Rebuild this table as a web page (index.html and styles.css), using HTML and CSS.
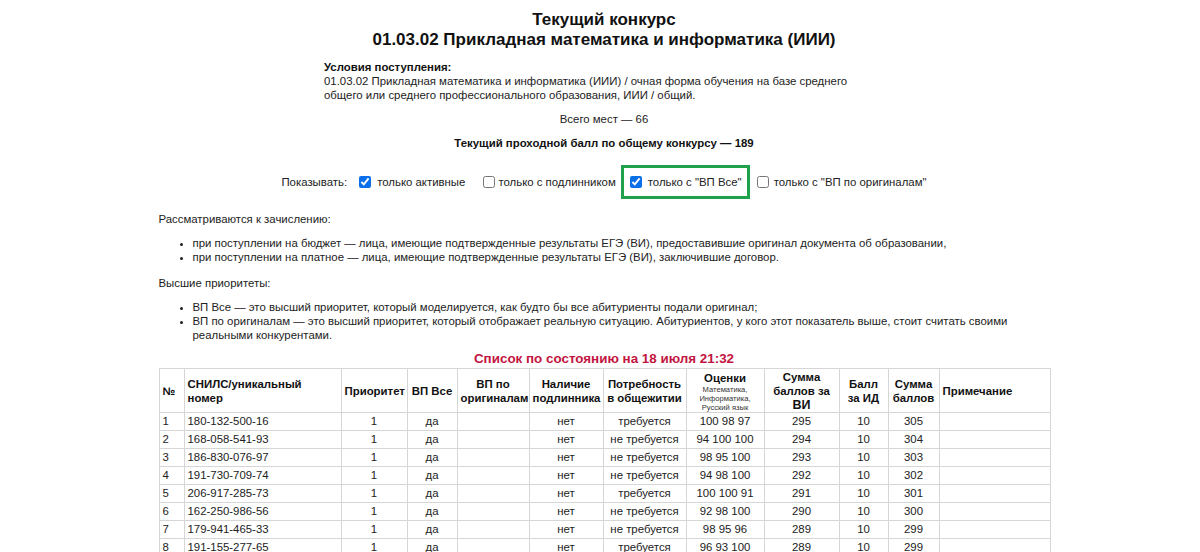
FILE: index.html
```html
<!DOCTYPE html>
<html lang="ru">
<head>
<meta charset="utf-8">
<title>Текущий конкурс</title>
<link rel="stylesheet" href="styles.css">
</head>
<body>
<div class="page">
  <h1 class="title">Текущий конкурс<br>01.03.02 Прикладная математика и информатика (ИИИ)</h1>

  <div class="conditions">
    <b>Условия поступления:</b><br>
    01.03.02 Прикладная математика и информатика (ИИИ) / очная форма обучения на базе среднего общего или среднего профессионального образования, ИИИ / общий.
  </div>

  <p class="center places">Всего мест — 66</p>
  <p class="center pass"><b>Текущий проходной балл по общему конкурсу — 189</b></p>

  <div class="filters">
    <span class="filters-label">Показывать:</span>
    <label class="opt opt-active"><input type="checkbox" checked>только активные</label>
    <label class="opt opt-orig"><input type="checkbox">только с подлинником</label>
    <label class="opt opt-hl"><input type="checkbox" checked>только с "ВП Все"</label>
    <label class="opt opt-last"><input type="checkbox">только с "ВП по оригиналам"</label>
  </div>

  <div class="content">
    <p class="lead">Рассматриваются к зачислению:</p>
    <ul class="list">
      <li>при поступлении на бюджет — лица, имеющие подтвержденные результаты ЕГЭ (ВИ), предоставившие оригинал документа об образовании,</li>
      <li>при поступлении на платное — лица, имеющие подтвержденные результаты ЕГЭ (ВИ), заключившие договор.</li>
    </ul>
    <p class="lead lead2">Высшие приоритеты:</p>
    <ul class="list">
      <li>ВП Все — это высший приоритет, который моделируется, как будто бы все абитуриенты подали оригинал;</li>
      <li>ВП по оригиналам — это высший приоритет, который отображает реальную ситуацию. Абитуриентов, у кого этот показатель выше, стоит считать своими реальными конкурентами.</li>
    </ul>

    <h2 class="list-title">Список по состоянию на 18 июля 21:32</h2>

    <table class="grid">
      <colgroup>
        <col class="c-n"><col class="c-snils"><col class="c-prio"><col class="c-vp"><col class="c-vpo"><col class="c-orig"><col class="c-dorm"><col class="c-marks"><col class="c-sum"><col class="c-id"><col class="c-total"><col class="c-note">
      </colgroup>
      <thead>
        <tr>
          <th class="left">№</th>
          <th class="left">СНИЛС/уникальный номер</th>
          <th>Приоритет</th>
          <th>ВП Все</th>
          <th>ВП по оригиналам</th>
          <th>Наличие подлинника</th>
          <th>Потребность в общежитии</th>
          <th>Оценки<span class="sub">Математика, Информатика, Русский язык</span></th>
          <th>Сумма баллов за <span class="big">ВИ</span></th>
          <th>Балл за ИД</th>
          <th>Сумма баллов</th>
          <th class="left">Примечание</th>
        </tr>
      </thead>
      <tbody>
        <tr><td class="left">1</td><td class="left">180-132-500-16</td><td>1</td><td>да</td><td></td><td>нет</td><td>требуется</td><td>100 98 97</td><td>295</td><td>10</td><td>305</td><td></td></tr>
        <tr><td class="left">2</td><td class="left">168-058-541-93</td><td>1</td><td>да</td><td></td><td>нет</td><td>не требуется</td><td>94 100 100</td><td>294</td><td>10</td><td>304</td><td></td></tr>
        <tr><td class="left">3</td><td class="left">186-830-076-97</td><td>1</td><td>да</td><td></td><td>нет</td><td>не требуется</td><td>98 95 100</td><td>293</td><td>10</td><td>303</td><td></td></tr>
        <tr><td class="left">4</td><td class="left">191-730-709-74</td><td>1</td><td>да</td><td></td><td>нет</td><td>не требуется</td><td>94 98 100</td><td>292</td><td>10</td><td>302</td><td></td></tr>
        <tr><td class="left">5</td><td class="left">206-917-285-73</td><td>1</td><td>да</td><td></td><td>нет</td><td>требуется</td><td>100 100 91</td><td>291</td><td>10</td><td>301</td><td></td></tr>
        <tr><td class="left">6</td><td class="left">162-250-986-56</td><td>1</td><td>да</td><td></td><td>нет</td><td>не требуется</td><td>92 98 100</td><td>290</td><td>10</td><td>300</td><td></td></tr>
        <tr><td class="left">7</td><td class="left">179-941-465-33</td><td>1</td><td>да</td><td></td><td>нет</td><td>не требуется</td><td>98 95 96</td><td>289</td><td>10</td><td>299</td><td></td></tr>
        <tr><td class="left">8</td><td class="left">191-155-277-65</td><td>1</td><td>да</td><td></td><td>нет</td><td>требуется</td><td>96 93 100</td><td>289</td><td>10</td><td>299</td><td></td></tr>
      </tbody>
    </table>
  </div>
</div>
</body>
</html>
```

FILE: styles.css
```css
html, body {
  background: #fff;
}
body {
  margin: 0 0 0 8px;
  font-family: "Liberation Sans", Arial, sans-serif;
  font-size: 11.4px;
  line-height: 14px;
  color: #222;
}
.page {
  display: flex;
  flex-direction: column;
  align-items: center;
}
.title {
  margin: 10px 0 0;
  font-size: 17px;
  line-height: 20px;
  font-weight: bold;
  text-align: center;
  color: #111;
}
.conditions {
  width: 560px;
  margin-top: 10px;
  color: #222;
}
.conditions b {
  color: #111;
}
.center {
  text-align: center;
  margin: 0;
}
.places {
  margin-top: 10px;
}
.pass {
  margin-top: 10px;
  color: #111;
}
.filters {
  display: flex;
  align-items: center;
  margin-top: 15px;
  height: 34px;
}
.opt {
  display: flex;
  align-items: center;
}
.opt input {
  margin: 0;
  width: 12px;
  height: 12px;
  accent-color: #0a6fe8;
}
.opt-active {
  margin-left: 12px;
  gap: 6px;
}
.opt-orig {
  margin-left: 18px;
  gap: 3px;
}
.opt-hl {
  margin-left: 5px;
  gap: 6px;
  height: 28px;
  padding: 0 5px 0 6px;
  border: 3px solid #20a24a;
}
.opt-last {
  margin-left: 7px;
  gap: 5px;
}
.content {
  width: 891px;
  margin-top: 13px;
}
.lead {
  margin: 0;
}
.lead2 {
  margin-top: 12px;
}
.list {
  margin: 10px 0 0;
  padding-left: 34px;
}
.list-title {
  margin: 9px 0 0;
  text-align: center;
  font-size: 13.4px;
  line-height: 16px;
  font-weight: bold;
  color: #c2153f;
}
.grid {
  margin-top: 1px;
  width: 891px;
  table-layout: fixed;
  border-collapse: collapse;
  border: 1px solid #d2d2d2;
}
.grid th, .grid td {
  border: 1px solid #d6d6d6;
  text-align: center;
  vertical-align: middle;
}
.grid th {
  padding: 1px 3px 0;
  line-height: 14px;
  font-weight: bold;
  color: #111;
}
.grid td {
  padding: 1px 3px;
  line-height: 15px;
  color: #222;
}
.grid .left {
  text-align: left;
}
.sub {
  display: block;
  font-size: 7.6px;
  line-height: 9px;
  font-weight: normal;
  color: #333;
}
.big {
  font-size: 12.5px;
}
.c-n { width: 25px; }
.c-snils { width: 157px; }
.c-prio { width: 66px; }
.c-vp { width: 50px; }
.c-vpo { width: 72px; }
.c-orig { width: 74px; }
.c-dorm { width: 83px; }
.c-marks { width: 78px; }
.c-sum { width: 75px; }
.c-id { width: 49px; }
.c-total { width: 51px; }
.c-note { width: 111px; }
```
